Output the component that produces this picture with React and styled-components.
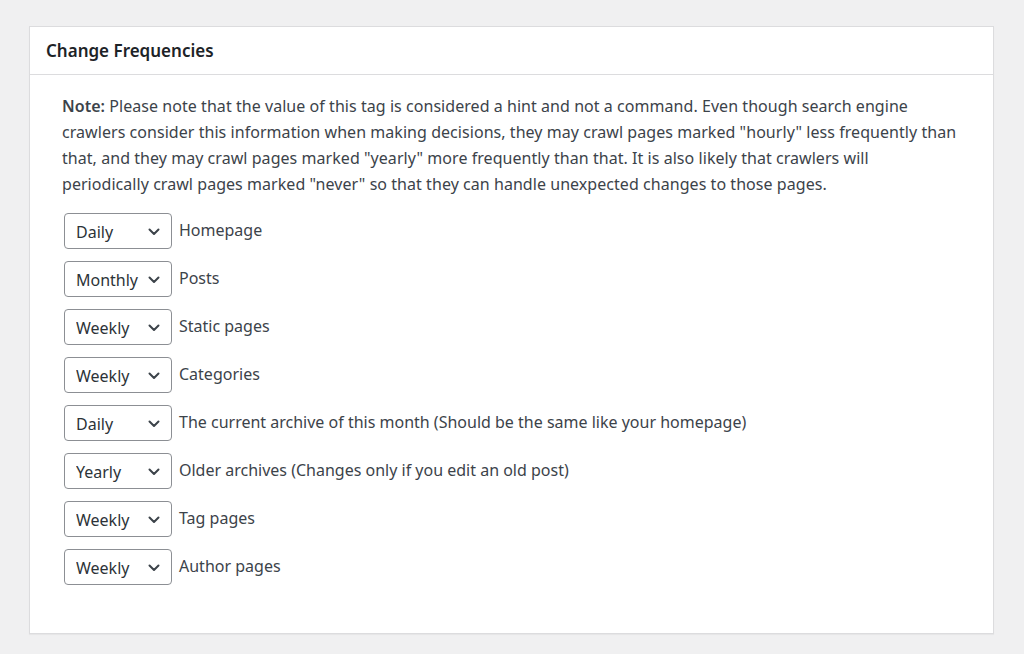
import React, { useState } from 'react';
import styled, { createGlobalStyle } from 'styled-components';

const GlobalStyle = createGlobalStyle`
  html, body {
    margin: 0;
    padding: 0;
    background: #f0f0f1;
  }
  body {
    font-family: "Noto Sans", "Open Sans", sans-serif;
    color: #3c434a;
  }
`;

const rows = [
  { value: 'daily', label: 'Homepage' },
  { value: 'monthly', label: 'Posts' },
  { value: 'weekly', label: 'Static pages' },
  { value: 'weekly', label: 'Categories' },
  { value: 'daily', label: 'The current archive of this month (Should be the same like your homepage)' },
  { value: 'yearly', label: 'Older archives (Changes only if you edit an old post)' },
  { value: 'weekly', label: 'Tag pages' },
  { value: 'weekly', label: 'Author pages' },
];

const options = ['Always', 'Hourly', 'Daily', 'Weekly', 'Monthly', 'Yearly', 'Never'];

function FreqSelect({ initial }) {
  const [val, setVal] = useState(initial);
  return (
    <SelectWrap>
      <Select value={val} onChange={e => setVal(e.target.value)}>
        {options.map(o => (
          <option key={o} value={o.toLowerCase()}>{o}</option>
        ))}
      </Select>
      <Chevron width="12" height="8" viewBox="0 0 12 8">
        <path d="M1.5 1.5 L6 6 L10.5 1.5" fill="none" stroke="#3c434a" strokeWidth="2" strokeLinecap="round" strokeLinejoin="round" />
      </Chevron>
    </SelectWrap>
  );
}

export default function App() {
  return (
    <Page>
      <GlobalStyle />
      <Panel>
        <Header>Change Frequencies</Header>
        <Body>
          <Note>
            <NoteLead>Note:</NoteLead> Please note that the value of this tag is considered a hint and not a command. Even though search engine crawlers consider this information when making decisions, they may crawl pages marked "hourly" less frequently than that, and they may crawl pages marked "yearly" more frequently than that. It is also likely that crawlers will periodically crawl pages marked "never" so that they can handle unexpected changes to those pages.
          </Note>
          <List>
            {rows.map((r, i) => (
              <Row key={i}>
                <FreqSelect initial={r.value} />
                <Label>{r.label}</Label>
              </Row>
            ))}
          </List>
        </Body>
      </Panel>
    </Page>
  );
}

const Page = styled.div`
  width: 1024px;
  height: 654px;
  padding: 26px 0 0 29px;
  box-sizing: border-box;
  overflow: hidden;
`;

const Panel = styled.div`
  width: 965px;
  height: 608px;
  box-sizing: border-box;
  background: #fff;
  border: 1px solid #dcdcde;
  box-shadow: 0 1px 1px rgba(0, 0, 0, 0.04);
`;

const Header = styled.h2`
  margin: 0;
  height: 48px;
  box-sizing: border-box;
  padding: 0 16px 1px;
  display: flex;
  align-items: center;
  border-bottom: 1px solid #dcdcde;
  font-size: 17px;
  font-weight: 600;
  color: #1d2327;
`;

const Body = styled.div`
  padding: 18px 32px 0 32px;
`;

const Note = styled.p`
  margin: 0;
  max-width: 895px;
  font-size: 16px;
  line-height: 26px;
  letter-spacing: 0.05px;
`;

const NoteLead = styled.strong`
  font-weight: 600;
`;

const List = styled.div`
  margin-top: 16px;
  padding-left: 2px;
  display: flex;
  flex-direction: column;
  gap: 12px;
`;

const Row = styled.div`
  display: flex;
  align-items: flex-start;
  gap: 7px;
`;

const SelectWrap = styled.div`
  position: relative;
  width: 108px;
  height: 36px;
  flex: none;
`;

const Select = styled.select`
  appearance: none;
  width: 100%;
  height: 100%;
  box-sizing: border-box;
  border: 1px solid #8c8f94;
  border-radius: 4px;
  background: #fff;
  padding: 2px 24px 0 11px;
  font-family: inherit;
  font-size: 16px;
  color: #2c3338;
  outline: none;
`;

const Chevron = styled.svg`
  position: absolute;
  right: 12px;
  top: 15px;
  pointer-events: none;
`;

const Label = styled.span`
  font-size: 16px;
  line-height: 26px;
  padding-top: 4px;
`;
